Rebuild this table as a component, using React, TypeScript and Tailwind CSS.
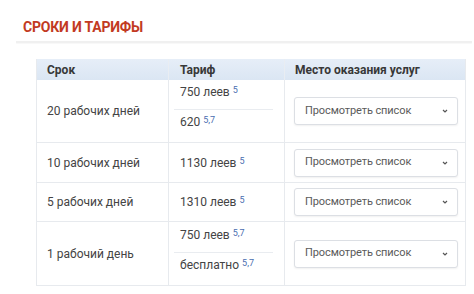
import React from "react"

type Price = { text: string; note: string }
type Row = { term: string; prices: Price[]; h: string }

const rows: Row[] = [
  { term: "20 рабочих дней", prices: [{ text: "750 леев", note: "5" }, { text: "620", note: "5,7" }], h: "h-[62px]" },
  { term: "10 рабочих дней", prices: [{ text: "1130 леев", note: "5" }], h: "h-[40px]" },
  { term: "5 рабочих дней", prices: [{ text: "1310 леев", note: "5" }], h: "h-[39px]" },
  { term: "1 рабочий день", prices: [{ text: "750 леев", note: "5,7" }, { text: "бесплатно", note: "5,7" }], h: "h-[64px]" },
]

function PriceLine({ p }: { p: Price }) {
  return (
    <span className="leading-[16px]">
      {p.text}{" "}
      <sup className="text-[9px] text-[#4a6db0] relative -top-[3px]">{p.note}</sup>
    </span>
  )
}

function PlaceSelect() {
  return (
    <div className="w-[164px] h-[28px] rounded-[3px] border border-[#dcdfe4] bg-white shadow-[0_1px_2px_rgba(0,0,0,0.06)] flex items-center justify-between pl-[10px] pr-[9px]">
      <span className="text-[11px] text-[#5a5a5a] tracking-[-0.1px]">Просмотреть список</span>
      <svg width="6" height="4" viewBox="0 0 6 4" className="text-[#555]">
        <path d="M1 1l2 2 2-2" fill="none" stroke="currentColor" strokeWidth="1.2" />
      </svg>
    </div>
  )
}

export default function App() {
  return (
    <div className="w-[474px] h-[294px] bg-white font-['Roboto',sans-serif] overflow-hidden">
      {/* heading */}
      <div className="pl-[16px] pr-[2px] pt-[19px]">
        <h2 className="pl-[7px] text-[14px] leading-[16px] font-bold text-[#c23a22] tracking-[-0.2px]">
          СРОКИ И ТАРИФЫ
        </h2>
        <div className="mt-[6px] h-[2px] bg-[#f0f0f0] shadow-[0_1px_1px_rgba(0,0,0,0.03)]" />
      </div>

      {/* terms table */}
      <div className="ml-[36px] mt-[16px] w-[430px] border-x border-b border-[#e7eaee] text-[12px] text-[#444]">
        <div className="grid grid-cols-[131px_116px_1fr] h-[21px] bg-gradient-to-b from-[#e6eef8] to-[#dbe6f3] font-bold text-[#383838]">
          <div className="pl-[10px] flex items-center">Срок</div>
          <div className="pl-[11px] flex items-center border-l border-[#e9edf2]">Тариф</div>
          <div className="pl-[10px] flex items-center border-l border-[#e9edf2]">Место оказания услуг</div>
        </div>
        {rows.map((r, i) => (
          <div
            key={i}
            className={`grid grid-cols-[131px_116px_1fr] ${r.h} ${i > 0 ? "border-t border-[#e7eaee]" : ""}`}
          >
            <div className="pl-[10px] flex items-center">{r.term}</div>
            <div className="border-l border-[#e7eaee] flex flex-col justify-center px-[5px]">
              {r.prices.length === 1 ? (
                <div className="pl-[6px]">
                  <PriceLine p={r.prices[0]} />
                </div>
              ) : (
                <>
                  <div className="pl-[6px] pb-[8px] border-b border-[#e9ecf0] mr-[6px]">
                    <PriceLine p={r.prices[0]} />
                  </div>
                  <div className="pl-[6px] pt-[3px] pb-[8px]">
                    <PriceLine p={r.prices[1]} />
                  </div>
                </>
              )}
            </div>
            <div className="border-l border-[#e7eaee] flex items-center pl-[9px]">
              <PlaceSelect />
            </div>
          </div>
        ))}
      </div>
    </div>
  )
}
